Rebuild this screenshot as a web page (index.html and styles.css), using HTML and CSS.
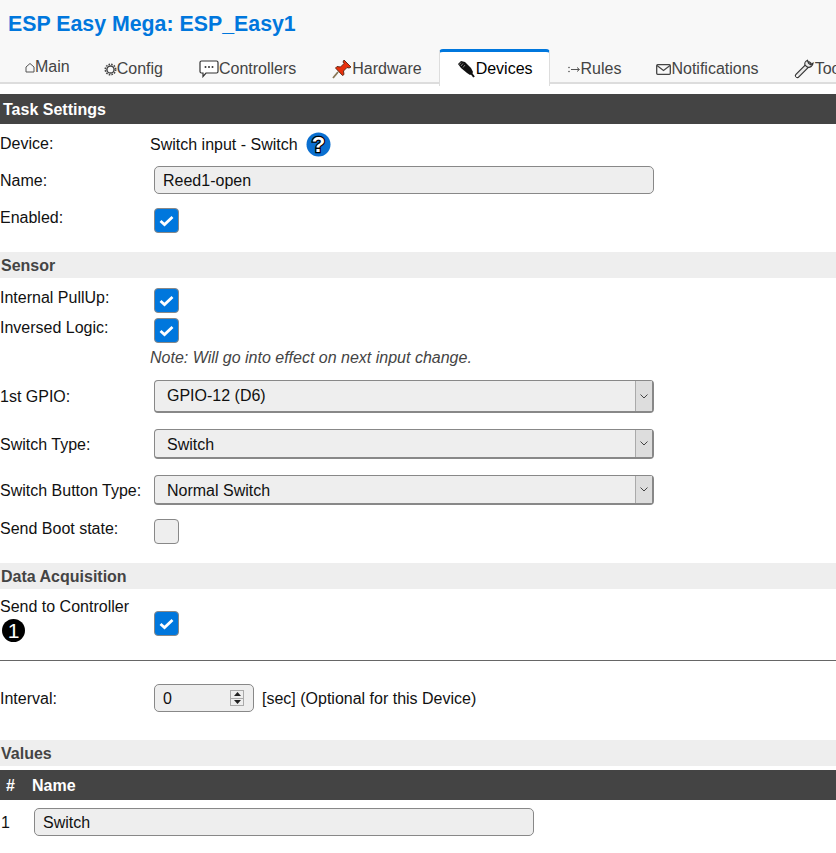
FILE: index.html
```html
<!DOCTYPE html>
<html lang="en">
<head>
<meta charset="utf-8">
<title>ESP Easy Mega: ESP_Easy1</title>
<link rel="stylesheet" href="styles.css">
</head>
<body>
<header class="top">
  <h1 class="title">ESP Easy Mega: ESP_Easy1</h1>
  <nav class="tabs">
    <a class="tab tab-main tab-tight"><svg class="ico" width="10" height="11" viewBox="0 0 10 11"><path d="M1 10V5L5 1.500 9 5v5z" fill="none" stroke="#555" stroke-width="1"/></svg>Main</a>
    <a class="tab tab-wide"><svg class="ico" width="13" height="13" viewBox="0 0 13 13"><circle cx="6.500" cy="6.500" r="3.600" fill="none" stroke="#444" stroke-width="1.500"/><circle cx="6.500" cy="6.500" r="5.300" fill="none" stroke="#444" stroke-width="1.400" stroke-dasharray="1.600 1.180"/></svg>Config</a>
    <a class="tab tab-wide"><svg class="ico" width="20" height="18" viewBox="0 0 20 18"><path d="M2.500 1h15A1.500 1.500 0 0 1 19 2.500v9a1.500 1.500 0 0 1-1.500 1.500H7l-3 3.500V13H2.500A1.500 1.500 0 0 1 1 11.500v-9A1.500 1.500 0 0 1 2.500 1z" fill="#fff" stroke="#333" stroke-width="1.200"/><circle cx="6.500" cy="7" r="1" fill="#333"/><circle cx="10" cy="7" r="1" fill="#333"/><circle cx="13.500" cy="7" r="1" fill="#333"/></svg>Controllers</a>
    <a class="tab"><svg class="ico" width="20" height="20" viewBox="0 0 20 20"><path d="M1 19l5-6" stroke="#875" stroke-width="1.800"/><path d="M12 1l7 7-2 1-2-.5-3.500 3.500.5 3.500-1.500 1-7-7.500 1.500-1.500 3.500.5L12 4.500 11 3z" fill="#e8300c" stroke="#521" stroke-width=".9"/></svg>Hardware</a>
    <a class="tab tab-active"><svg class="ico" width="19" height="19" viewBox="0 0 19 19"><path d="M4 1l4 1 6 6 2 4-1 2-2 1-3-2-6-5-3-4z" fill="#111"/><path d="M14 13l3 4" stroke="#111" stroke-width="2"/><path d="M4 2.500l-1.500 2M6 3.500l-2 2.500M8 5l-2 2.500" stroke="#999" stroke-width=".8"/></svg>Devices</a>
    <a class="tab"><svg class="ico" width="13" height="9" viewBox="0 0 13 9"><circle cx="1" cy="2.500" r=".8" fill="#555"/><circle cx="1" cy="6.500" r=".8" fill="#555"/><path d="M3 4.500h8M9 2.500l2.500 2L9 6.500" fill="none" stroke="#555" stroke-width="1"/></svg>Rules</a>
    <a class="tab"><svg class="ico" width="15" height="11" viewBox="0 0 15 11"><rect x=".7" y=".7" width="13.600" height="9.600" rx="1" fill="none" stroke="#444" stroke-width="1.300"/><path d="M1 1.500l6.500 5 6.500-5" fill="none" stroke="#444" stroke-width="1.200"/></svg>Notifications</a>
    <a class="tab"><svg class="ico ico-tool" width="20" height="20" viewBox="0 0 20 20"><path d="M15 5L3.500 16.500" stroke="#333" stroke-width="5" stroke-linecap="round"/><path d="M15 5L3.500 16.500" stroke="#e8e8e8" stroke-width="2.600" stroke-linecap="round"/><path d="M13.500 1.200a4 4 0 0 0-2.500 5l2.500 2a4.500 4.500 0 0 0 5.500-4l-2.500 1.500-2-1.500z" fill="#e8e8e8" stroke="#333" stroke-width="1.200"/><circle cx="3" cy="17" r="1" fill="#fff"/></svg>Tools</a>
  </nav>
</header>

<main class="content">
  <div class="bar-dark">Task Settings</div>

  <div class="row row-device">
    <span class="label raised-small">Device:</span>
    <span class="device-value">Switch input - Switch</span>
    <svg class="help" width="25" height="25" viewBox="0 0 25 25"><circle cx="12.500" cy="12.500" r="12" fill="#0a6fd0"/><text x="12.500" y="20" text-anchor="middle" class="help-mark">?</text></svg>
  </div>
  <div class="row gap-9">
    <span class="label lowered">Name:</span>
    <input class="field" type="text" value="Reed1-open">
  </div>
  <div class="row gap-14">
    <span class="label raised">Enabled:</span>
    <span class="check on"><svg width="15" height="12" viewBox="0 0 15 12"><path d="M1.500 6l4 3.500 8-7.500" fill="none" stroke="#fff" stroke-width="2.800"/></svg></span>
  </div>

  <h2 class="bar-light sensor">Sensor</h2>
  <div class="row gap-10">
    <span class="label raised">Internal PullUp:</span>
    <span class="check on"><svg width="15" height="12" viewBox="0 0 15 12"><path d="M1.500 6l4 3.500 8-7.500" fill="none" stroke="#fff" stroke-width="2.800"/></svg></span>
  </div>
  <div class="row gap-5">
    <span class="label raised">Inversed Logic:</span>
    <span class="check on"><svg width="15" height="12" viewBox="0 0 15 12"><path d="M1.500 6l4 3.500 8-7.500" fill="none" stroke="#fff" stroke-width="2.800"/></svg></span>
  </div>
  <div class="note">Note: Will go into effect on next input change.</div>
  <div class="row gap-note">
    <span class="label">1st GPIO:</span>
    <span class="select select-tall"><span>GPIO-12 (D6)</span><span class="arrow"><svg width="8" height="5" viewBox="0 0 8 5"><path d="M.5.500L4 4 7.500.500" fill="none" stroke="#444" stroke-width="1"/></svg></span></span>
  </div>
  <div class="row gap-16">
    <span class="label lowered">Switch Type:</span>
    <span class="select select-low"><span>Switch</span><span class="arrow"><svg width="8" height="5" viewBox="0 0 8 5"><path d="M.5.500L4 4 7.500.500" fill="none" stroke="#444" stroke-width="1"/></svg></span></span>
  </div>
  <div class="row gap-16">
    <span class="label lowered">Switch Button Type:</span>
    <span class="select select-low"><span>Normal Switch</span><span class="arrow"><svg width="8" height="5" viewBox="0 0 8 5"><path d="M.5.500L4 4 7.500.500" fill="none" stroke="#444" stroke-width="1"/></svg></span></span>
  </div>
  <div class="row gap-14">
    <span class="label raised">Send Boot state:</span>
    <span class="check"></span>
  </div>

  <h2 class="bar-light acquisition">Data Acquisition</h2>
  <div class="row row-controller">
    <div class="label label-controller">
      <div>Send to Controller</div>
      <span class="badge">1</span>
    </div>
    <span class="check on check-controller"><svg width="15" height="12" viewBox="0 0 15 12"><path d="M1.500 6l4 3.500 8-7.500" fill="none" stroke="#fff" stroke-width="2.800"/></svg></span>
  </div>
  <hr class="rule">
  <div class="row row-interval">
    <span class="label lowered">Interval:</span>
    <span class="number">
      <input class="field field-number" type="number" value="0">
      <span class="spin"><span class="spin-cell"><svg width="7" height="4" viewBox="0 0 7 4"><path d="M3.500 0L7 4H0z" fill="#222"/></svg></span><span class="spin-cell"><svg width="7" height="4" viewBox="0 0 7 4"><path d="M0 0h7L3.500 4z" fill="#222"/></svg></span></span>
    </span>
    <span class="hint lowered">[sec] (Optional for this Device)</span>
  </div>

  <h2 class="bar-light values">Values</h2>
  <div class="bar-dark bar-values"><span class="col-hash">#</span><span>Name</span></div>
  <div class="row value-row">
    <span class="value-index lowered">1</span>
    <input class="field" type="text" value="Switch">
  </div>
</main>
</body>
</html>
```

FILE: styles.css
```css
* { box-sizing: border-box; }
html, body { margin: 0; padding: 0; height: 100%; overflow: hidden; background: #fff; }
body { font: 16px/18px "Liberation Sans", Arial, sans-serif; color: #111; }

.top { height: 84px; background: #f8f8f8; border-bottom: 2px solid #ddd; }
.title { margin: 0; padding: 12px 0 0 8px; height: 49px; font-size: 21.330px; line-height: 24px; font-weight: 700; color: #0077dd; }
.tabs { display: flex; padding-left: 7px; height: 37px; overflow: hidden; white-space: nowrap; }
.tab { display: flex; align-items: center; flex: none; height: 37px; padding: 2px 16px 0 17px; border: 1px solid transparent; border-bottom: 0; color: #444; }
.tab-tight { padding-right: 15px; }
.tab-wide { padding-right: 17px; }
.tab-main { padding-top: 0; padding-bottom: 2px; }
.tab-active { padding-top: 0; background: #fff; color: #000; border-color: #ddd; border-top: 3px solid #0077dd; border-radius: 4px 4px 0 0; }
.ico { flex: none; }
.ico-tool { margin-right: 1px; }

.content { margin-top: 10px; }
.bar-dark { height: 30px; background: #444; color: #fff; font-weight: 700; line-height: 31px; padding-left: 3px; }
.bar-light { margin: 0; height: 26px; background: #eee; color: #444; font-size: 16px; font-weight: 700; line-height: 27px; padding-left: 1px; }
.sensor { margin-top: 19px; }
.acquisition { margin-top: 19px; }
.values { margin-top: 28px; }

.row { display: flex; align-items: center; }
.row-device { margin-top: 8px; }
.gap-5 { margin-top: 5px; }
.gap-9 { margin-top: 9px; }
.gap-10 { margin-top: 10px; }
.gap-14 { margin-top: 14px; }
.gap-16 { margin-top: 16px; }
.gap-note { margin-top: 13px; }

.label { flex: none; width: 154px; }
.raised { margin-bottom: 6px; }
.raised-small { margin-bottom: 2px; }
.lowered { padding-top: 2px; }
.label-controller { padding-top: 1px; }
.device-value { margin-left: -4px; }
.help { margin-left: 8px; flex: none; }
.help-mark { font: 700 22px "Liberation Sans", Arial, sans-serif; fill: #fff; stroke: #000; stroke-width: 2.500; paint-order: stroke; }

.field { width: 500px; height: 28px; padding: 1px 8px 0; border: 1px solid #888; border-radius: 5px; background: #eee; font: 16px "Liberation Sans", Arial, sans-serif; color: #111; outline: 0; }
.number { position: relative; display: block; flex: none; width: 100px; height: 28px; }
.field-number { display: block; width: 100px; appearance: textfield; }
.field-number::-webkit-inner-spin-button { appearance: none; }
.spin { position: absolute; top: 6px; right: 10px; display: flex; flex-direction: column; width: 14px; height: 16px; border: 1px solid #aaa; background: #eee; }
.spin-cell { display: flex; flex: 1; align-items: center; justify-content: center; }
.spin-cell + .spin-cell { border-top: 1px solid #aaa; }
.hint { margin-left: 8px; }

.check { display: flex; align-items: center; justify-content: center; flex: none; width: 25px; height: 25px; border: 1px solid #888; border-radius: 4px; background: #eee; }
.on { background: #0077dd; }

.note { margin: 6px 0 0 150px; color: #444; font-style: italic; }

.select { position: relative; display: flex; align-items: center; flex: none; width: 500px; height: 30px; padding-left: 12px; border: 1px solid #888; border-width: 1px 2px 2px 1px; border-radius: 4px; background: #eee; }
.select-tall { height: 33px; }
.select-low { padding-top: 2px; }
.arrow { position: absolute; top: 0; right: 0; bottom: 0; width: 17px; display: flex; align-items: center; justify-content: center; background: #ddd; border-left: 1px solid #aaa; }

.row-controller { margin-top: 8px; align-items: flex-start; height: 55px; }
.check-controller { margin-top: 14px; }
.badge { display: block; width: 23px; height: 23px; margin: 3px 0 0 2px; border-radius: 50%; background: #000; color: #fff; font-size: 21px; line-height: 24px; text-align: center; }

.rule { margin: 8px 0 0; height: 1px; border: 0; background: #666; }
.row-interval { margin-top: 23px; }

.bar-values { display: flex; margin-top: 4px; padding-left: 6px; }
.col-hash { width: 26px; }
.value-row { margin-top: 8px; }
.value-index { width: 34px; padding-left: 1px; }
```
